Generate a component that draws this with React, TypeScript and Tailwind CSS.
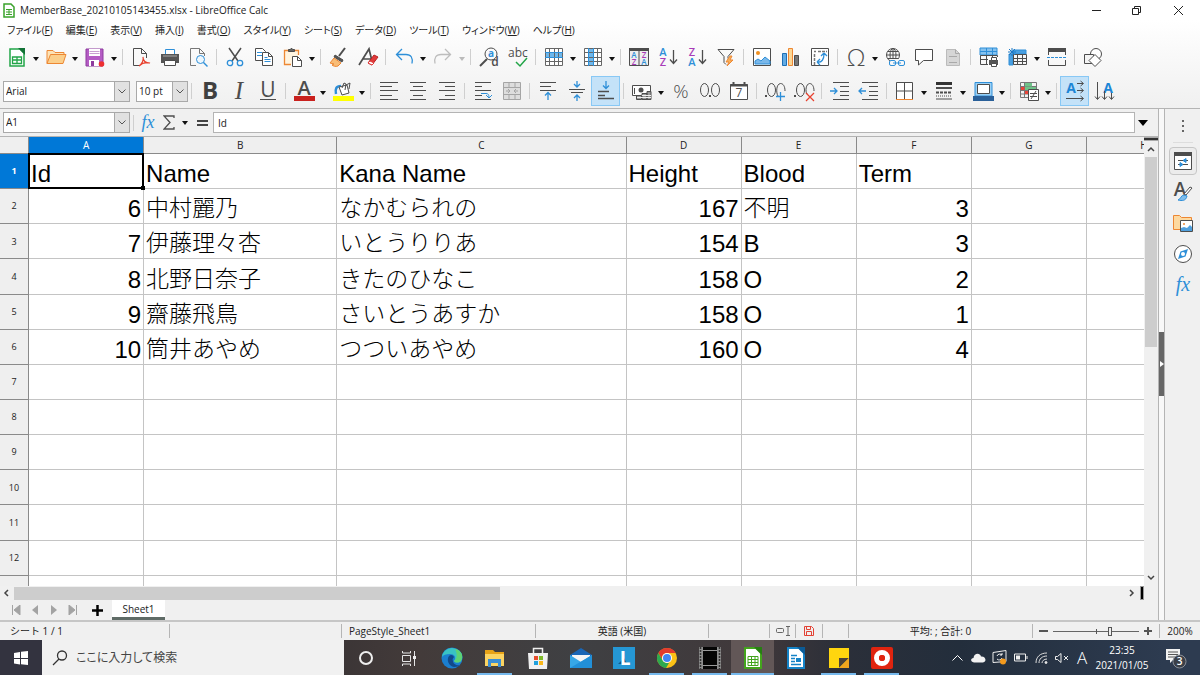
import type { ReactNode } from "react";

type Tool = { icon: ReactNode; label: string; menu?: boolean; muted?: boolean; active?: boolean };

const INK = "#4d4d4d";
const BLUE = "#2e8fd8";
const ORANGE = "#ed8733";

function Svg({ children, size = 20 }: { children: ReactNode; size?: number }) {
  return (
    <svg width={size} height={size} viewBox={`0 0 ${size} ${size}`} fill="none" stroke={INK} className="shrink-0 overflow-visible" aria-hidden="true">
      {children}
    </svg>
  );
}

function Letter({ x, y, size, fill, children, weight = 400 }: { x: number; y: number; size: number; fill: string; children: string; weight?: number }) {
  return (
    <text x={x} y={y} fontSize={size} fill={fill} fontWeight={weight} stroke="none" textAnchor="middle" fontFamily="Open Sans, sans-serif">{children}</text>
  );
}

function Fx({ size = 20 }: { size?: number }) {
  return (
    <Svg size={size}>
      <text x={size / 2} y={size - 4} fontSize={size} fill={BLUE} stroke="none" textAnchor="middle" fontStyle="italic" fontFamily="Liberation Serif, serif">fx</text>
    </Svg>
  );
}

const gridLines = <path d="M1.5 1.5h17v17h-17zM1.5 5.5h17M1.5 10.5h17M1.5 14.5h17M5.5 1.5v17M10.5 1.5v17M14.5 1.5v17" stroke="#666" />;

const standardTools: Tool[][] = [
  [
    { label: "新規", menu: true, icon: <Svg><path d="M3 2h10l4 4v13H3z" fill="#fff" stroke="#22a548" strokeWidth="1.500" /><path d="M11 1h7v7z" fill="#127336" stroke="none" /><path d="M5.500 10h9v6.500h-9zM5.500 13h9M10 10v6.500" stroke="#22a548" strokeWidth="1.300" /></Svg> },
    { label: "開く", menu: true, icon: <Svg><path d="M1 16.500V3.500h6l2 2h9v3" fill="#fde3b6" stroke={ORANGE} /><path d="M1 16.500l3.500-9h15.500l-3 9z" fill="#fbcf8b" stroke={ORANGE} /></Svg> },
    { label: "保存", menu: true, icon: <Svg><path d="M1 2h17v17H1z" fill="#b45cc4" stroke="#8d3b9e" /><path d="M4 2h11v7H4z" fill="#fff" stroke="none" /><path d="M4 13h10v6H4z" fill="#fff" stroke="none" /><path d="M6 14h3v5H6z" fill="#8d3b9e" stroke="none" /><path d="M4.500 4.500h10M4.500 6.500h10" stroke="#c9a0d2" /><circle cx="16.500" cy="17" r="2.800" fill="#ee3030" stroke="none" /></Svg> },
  ],
  [
    { label: "PDF", icon: <Svg><path d="M8 18.500H2.500v-17h8l5 5V11M10.500 1.500v5h5" /><path d="M8 19c3-2 5-6 4-9 0 4 3 6 7 6-4-1-8 0-11 3z" stroke="#e8402e" strokeWidth="1.200" /></Svg> },
    { label: "印刷", icon: <Svg><path d="M5.500 8V2.500h9V8" fill="#fff" stroke={BLUE} /><path d="M1 7h18v9H1z" fill="#555" stroke="none" /><path d="M3 9h14" stroke="#aaa" /><path d="M4.500 13.500h11v5h-11z" fill="#fff" /></Svg> },
    { label: "印刷プレビュー", icon: <Svg><path d="M7 18.500H1.500v-17h9l5 5V9M10.500 1.500v5h5" stroke="#777" /><circle cx="11.500" cy="12.500" r="4" stroke={BLUE} fill="#eef7fd" /><path d="M14.500 15.500l4 4" stroke={BLUE} strokeWidth="1.500" /></Svg> },
  ],
  [
    { label: "切り取り", icon: <Svg><path d="M4 1l9 13M16 1L7 14" strokeWidth="1.500" /><circle cx="5" cy="16" r="2.700" stroke={BLUE} strokeWidth="1.300" /><circle cx="15" cy="16" r="2.700" stroke={BLUE} strokeWidth="1.300" /></Svg> },
    { label: "コピー", icon: <Svg><path d="M1.500 1.500h7l3 3v9h-10z" fill="#fff" /><path d="M3 5.500h5M3 8.500h5" stroke={BLUE} /><path d="M8.500 5.500h6l4 4v9h-10z" fill="#fff" /><path d="M14.500 5.500v4h4" /><path d="M10.500 10.500h3M10.500 12.500h6M10.500 14.500h6" stroke={BLUE} /></Svg> },
    { label: "貼り付け", menu: true, icon: <Svg><path d="M8 17.500H1.500v-14h14V8" stroke={ORANGE} fill="#fff4e0" strokeWidth="1.300" /><path d="M5.500 4.500v-2h2l1-1.500 1 1.500h2v2z" fill="#666" /><path d="M9.500 9.500h5l4 4v6h-9z" fill="#fff" /><path d="M14.500 9.500v4h4" /></Svg> },
  ],
  [
    { label: "書式のコピー", icon: <Svg><path d="M16 1l-6 8" strokeWidth="2" /><path d="M6 8l8 5-1 2-8-5z" fill="#555" /><path d="M5 11l7 5-3 3c-2 1-5 0-6-1l2-1-4-1z" fill="#f8bd78" stroke={ORANGE} /></Svg> },
    { label: "書式のクリア", icon: <Svg><path d="M1 18L11 2l3 12M5 12h8" strokeWidth="1.700" /><path d="M10 16l6-8 4 2-6 8z" fill="#e03a3a" stroke="#b92222" /><path d="M10 16l2-2 4 2-2 2z" fill="#fff" stroke="#e03a3a" /></Svg> },
  ],
  [
    { label: "元に戻す", menu: true, icon: <Svg><path d="M8 2L2.500 7.500 8 13M3 7.500h9c5 0 7 3 6 9" stroke={BLUE} strokeWidth="1.300" /></Svg> },
    { label: "やり直し", menu: true, muted: true, icon: <Svg><path d="M12 2l5.500 5.500L12 13M17 7.500H8c-5 0-7 3-6 9" stroke="#bdbdbd" strokeWidth="1.300" /></Svg> },
  ],
  [
    { label: "検索と置換", icon: <Svg><circle cx="12" cy="7" r="6" /><path d="M8 12l-7 7" strokeWidth="2" /><Letter x={12} y={10} size={10} fill={BLUE} weight={700}>a</Letter><Letter x={16} y={19} size={12} fill={INK} weight={600}>d</Letter></Svg> },
    { label: "スペルチェック", icon: <Svg><Letter x={10} y={10} size={12} fill={INK}>abc</Letter><path d="M8 15l4 4 7-8" stroke="#22a548" strokeWidth="1.500" /></Svg> },
  ],
  [
    { label: "行", menu: true, icon: <Svg><path d="M1 1h18v18H1z" fill="#fff" stroke="none" /><path d="M1 5h18v5H1z" fill="#6db7ec" stroke="none" />{gridLines}<path d="M1 5.500h18M1 10.500h18" stroke={BLUE} /></Svg> },
    { label: "列", menu: true, icon: <Svg><path d="M1 1h18v18H1z" fill="#fff" stroke="none" /><path d="M5 1h6v18H5z" fill="#6db7ec" stroke="none" />{gridLines}<path d="M5.500 1v18M10.500 1v18" stroke={BLUE} /></Svg> },
  ],
  [
    { label: "並べ替え", icon: <Svg><path d="M.5 1.500h19v17H.5z" fill="#eee" /><path d="M0 1h20v3H0z" fill={INK} stroke="none" /><path d="M10 4v14" /><Letter x={5} y={11} size={8} fill={BLUE} weight={600}>A</Letter><Letter x={5} y={18} size={8} fill="#a83bb8" weight={600}>Z</Letter><Letter x={15} y={11} size={8} fill="#a83bb8" weight={600}>Z</Letter><Letter x={15} y={18} size={8} fill={BLUE} weight={600}>A</Letter></Svg> },
    { label: "昇順", icon: <Svg><Letter x={5} y={9} size={11} fill={BLUE} weight={600}>A</Letter><Letter x={5} y={19} size={11} fill="#a83bb8" weight={600}>Z</Letter><path d="M15.500 3v13M12 12.500l3.500 4 3.500-4" strokeWidth="1.300" /></Svg> },
    { label: "降順", icon: <Svg><Letter x={5} y={9} size={11} fill="#a83bb8" weight={600}>Z</Letter><Letter x={5} y={19} size={11} fill={BLUE} weight={600}>A</Letter><path d="M15.500 3v13M12 12.500l3.500 4 3.500-4" strokeWidth="1.300" /></Svg> },
    { label: "オートフィルター", icon: <Svg><path d="M2 2.500h16l-6 7v2M2 2.500l6 7v6l2 2" /><path d="M14 9l-4 6h3l-2 4 6-6h-3l2-4z" fill="#f9b15a" stroke={ORANGE} /></Svg> },
  ],
  [
    { label: "画像", icon: <Svg><path d="M1.500 1.500h17v17h-17z" fill="#fff" /><circle cx="6" cy="6" r="2" fill="#ef9021" stroke="none" /><path d="M3 17v-3l3-2 3 2 4-4 5 4v3z" fill="#7ab8ea" stroke={BLUE} /></Svg> },
    { label: "グラフ", icon: <Svg><path d="M1.500 6.500h4v12h-4z" fill="#63abe4" stroke="#1d6fb5" /><path d="M7.500 1.500h4v17h-4z" fill="#fcd795" stroke={ORANGE} /><path d="M13.500 8.500h4v10h-4z" fill="#777" /></Svg> },
    { label: "ピボットテーブル", icon: <Svg><path d="M1.500 1.500h17v17h-17z" fill="#fff" /><path d="M4 4.500h2M8 4.500h9M4.500 7v11" strokeWidth="1.500" strokeDasharray="3 1" stroke="#777" /><path d="M7 15c5 1 7-3 7-8M7 15l3-3M7 15l3 3M14 6l-3 3M14 6l3 3" stroke={BLUE} strokeWidth="1.300" /></Svg> },
  ],
  [
    { label: "特殊文字", menu: true, icon: <Svg><Letter x={10} y={19} size={24} fill={INK} weight={300}>Ω</Letter></Svg> },
    { label: "ハイパーリンク", icon: <Svg><circle cx="8" cy="8" r="6.500" /><ellipse cx="8" cy="8" rx="3" ry="6.500" /><path d="M1.500 8h13M3 4.500h10M3 11.500h10M8 1.500v13" /><path d="M5 12h14v7H5z" fill="#f8f8f8" stroke="none" /><rect x="4.500" y="13.500" width="6" height="5" rx="1.500" stroke={BLUE} /><rect x="13.500" y="13.500" width="6" height="5" rx="1.500" stroke={BLUE} /><path d="M8 16h8" stroke={BLUE} /></Svg> },
    { label: "コメント", icon: <Svg><path d="M1.500 2.500h17v11h-9l-5 4.500v-4.500h-3z" fill="#fff" /></Svg> },
    { label: "ヘッダーとフッター", icon: <Svg><path d="M3.500 2.500h9l4 4v12h-13z" fill="#d6d6d6" stroke="#bbb" /><path d="M12.500 2.500v4h4M6 9.500h8M6 15.500h8" stroke="#a9a9a9" /></Svg> },
  ],
  [
    { label: "印刷範囲", icon: <Svg><path d="M1 1h17v7H1z" fill="#86c2ef" stroke={BLUE} /><path d="M1.500 8.500h17v9h-17zM1.500 12.500h17M7.500 8.500v9M13.500 8.500v9" /><path d="M1 4.500h17M7.500 1v7M13.500 1v7" stroke={BLUE} /><path d="M9 10h11v10H9z" fill="#fff" stroke="none" /><path d="M10 13h9v5h-9z" fill="#555" stroke="none" /><path d="M12.500 10.500h5v3h-5zM12.500 16.500h5v3h-5z" fill="#fff" /></Svg> },
    { label: "行と列の固定", menu: true, icon: <Svg><path d="M5 3h13v4H5zM1 7h4v11H1z" fill="#4a9fe0" stroke={BLUE} /><path d="M5.500 7.500h13v10h-13zM5.500 11.500h13M5.500 14.500h13M9.500 7v10M14.500 7v10" /><path d="M4 1v8M0 5h8M1 2l6 6M7 2L1 8" stroke="#1d78c4" /></Svg> },
    { label: "ウィンドウの分割", icon: <Svg><path d="M1 1h18v4H1z" fill={INK} stroke="none" /><path d="M1.500 5v3M18.500 5v3M1.500 13v5.500h17V13" /><path d="M0 10.500h20" stroke={BLUE} strokeDasharray="3 1" /></Svg> },
  ],
  [
    { label: "図形描画機能", icon: <Svg><circle cx="13" cy="7" r="5.500" fill="#fff" /><path d="M1.500 7.500h9v9h-9z" fill="#f4f4f4" /><path d="M12 7.500l6 6-6 6-6-6z" fill="#fff" /></Svg> },
  ],
];

const formattingTools: Tool[][] = [
  [
    { label: "太字", icon: <Svg><Letter x={10} y={18} size={24} fill="#404040" weight={700}>B</Letter></Svg> },
    { label: "斜体", icon: <Svg><text x="10" y="18" fontSize="25" fill={INK} stroke="none" textAnchor="middle" fontStyle="italic" fontFamily="Liberation Serif, serif">I</text></Svg> },
    { label: "下線", icon: <Svg><Letter x={10} y={16} size={21} fill={INK}>U</Letter><path d="M2 18.500h16" /></Svg> },
  ],
  [
    { label: "文字の色", menu: true, icon: <Svg><Letter x={10} y={14} size={20} fill={INK} weight={600}>A</Letter><path d="M0 15h21v5H0z" fill="#c9211e" stroke="none" /></Svg> },
    { label: "背景色", menu: true, icon: <Svg><path d="M0 15h21v5H0z" fill="#ff0" stroke="none" /><path d="M3 13c-1-5 0-8 5-8" stroke={BLUE} strokeWidth="2.500" /><path d="M6 6l8-2 2 8-7 2z" fill="#fff" /><path d="M9 7l2-5 2 1-1 6M13 4l4-2-1 6" /></Svg> },
  ],
  [
    { label: "左揃え", icon: <Svg><path d="M1 1.500h18M1 5.500h12M1 9.500h18M1 14.500h12M1 18.500h18" /></Svg> },
    { label: "中央揃え", icon: <Svg><path d="M2 1.500h16M5 5.500h10M2 9.500h16M5 14.500h10M2 18.500h16" /></Svg> },
    { label: "右揃え", icon: <Svg><path d="M2 1.500h16M8 5.500h10M2 9.500h16M8 14.500h10M2 18.500h16" /></Svg> },
  ],
  [
    { label: "折り返し", icon: <Svg><path d="M2 1.500h16M2 5.500h7M2 9.500h16M2 14.500h7M2 18.500h16" /><path d="M8 12.500h5c2 0 3 1 3 4M13 14l3 3 3-3" stroke={BLUE} fill="#f8f8f8" /></Svg> },
    { label: "セルの結合", icon: <Svg><path d="M1.500 1.500h17v17h-17z" fill="#ddd" stroke="#a5a5a5" /><path d="M1 6.500h18M1 13.500h18M7 1.500v5M13 1.500v5M7 13.500v5M13 13.500v5M4 10h4M12 10h4M6 8l2 2-2 2M14 8l-2 2 2 2" stroke="#a5a5a5" /></Svg> },
  ],
  [
    { label: "上揃え", icon: <Svg><path d="M2 1.500h16M2 5.500h11M2 9.500h16" /><path d="M10 19v-7M7 14.500l3-3 3 3" stroke={BLUE} strokeWidth="1.300" /></Svg> },
    { label: "上下中央揃え", icon: <Svg><path d="M2 8.500h16M4 11.500h12" /><path d="M10 0v6M7 3l3 3 3-3M10 20v-6M7 17l3-3 3 3" stroke={BLUE} strokeWidth="1.300" /></Svg> },
    { label: "下揃え", active: true, icon: <Svg><path d="M2 10.500h11M2 14.500h7M2 17.500h16" strokeWidth="1.300" /><path d="M10 0v7M7 4.500l3 3 3-3" stroke={BLUE} strokeWidth="1.300" /></Svg> },
  ],
  [
    { label: "通貨", menu: true, icon: <Svg><path d="M5 14.500H.5v-10h18V10" fill="#fff" /><path d="M2.500 7v6" /><circle cx="9" cy="9" r="2.500" fill={INK} stroke="none" /><path d="M4.500 14.500h5v4h-5zM10 12.500h5v6h-5zM15 10.500h4v8h-4z" fill="#999" /><path d="M5 16.500h14M10 14.500h9" stroke="#eee" /></Svg> },
    { label: "パーセント", icon: <Svg><Letter x={10} y={17} size={19} fill={INK} weight={300}>%</Letter></Svg> },
    { label: "数値", icon: <Svg><ellipse cx="4.500" cy="9" rx="4" ry="6.500" /><ellipse cx="15.500" cy="9" rx="4" ry="6.500" /><path d="M9 14h2v2H9z" fill={INK} stroke="none" /></Svg> },
    { label: "日付", icon: <Svg><path d="M1.500 3.500h17v15h-17z" fill="#fff" /><path d="M1 4.500h18" strokeWidth="2" /><path d="M4.500 1v3M15.500 1v3" strokeWidth="2" /><Letter x={10} y={16} size={12} fill={INK}>7</Letter></Svg> },
  ],
  [
    { label: "小数点以下を追加", icon: <Svg><path d="M0 14h2v2H0z" fill={INK} stroke="none" /><ellipse cx="6.500" cy="9" rx="4" ry="6.500" /><path d="M13 15c-2-3-2-12 2.500-12.500C18 2.500 20 5 20 10" /><path d="M15.500 11v9M11 15.500h9" stroke={BLUE} strokeWidth="1.300" /></Svg> },
    { label: "小数点以下を削除", icon: <Svg><path d="M0 14h2v2H0z" fill={INK} stroke="none" /><ellipse cx="6.500" cy="9" rx="4" ry="6.500" /><path d="M13 13c-2-3-1-10 2.500-10.500C18 2.500 20 5 20 10" /><path d="M12 12l8 8M20 12l-8 8" stroke="#e8402e" strokeWidth="1.200" /></Svg> },
  ],
  [
    { label: "インデントを増やす", icon: <Svg><path d="M3 1.500h16M10 5.500h9M10 10.500h9M10 14.500h9M3 18.500h16" /><path d="M0 10h7M4 7l3 3-3 3" stroke={BLUE} strokeWidth="1.300" /></Svg> },
    { label: "インデントを減らす", icon: <Svg><path d="M3 1.500h16M10 5.500h9M10 10.500h9M10 14.500h9M3 18.500h16" /><path d="M7 10H0M3 7l-3 3 3 3" stroke={BLUE} strokeWidth="1.300" /></Svg> },
  ],
  [
    { label: "枠線", menu: true, icon: <Svg><path d="M1.500 18V1.500h16V18M1.500 10h16M9.500 1.500V18" fill="#fff" /><path d="M1 18.500h17" stroke={ORANGE} /></Svg> },
    { label: "枠線のスタイル", menu: true, icon: <Svg><path d="M2 2.500h16" strokeWidth="3" stroke="#333" /><path d="M2 7h16" strokeWidth="2" /><path d="M2 11.500h16" strokeDasharray="3 1" strokeWidth="2" /><path d="M2 15h16" strokeDasharray="1 1" /><path d="M2 18h16" /></Svg> },
    { label: "枠線の色", menu: true, icon: <Svg><path d="M2 1.500h17V15H2z" fill="#9bd0f5" stroke={BLUE} /><path d="M4.500 3.500h12v9h-12z" fill="#fff" /><path d="M0 15h21v5H0z" fill="#2a6099" stroke="none" /></Svg> },
  ],
  [
    { label: "条件付き書式", menu: true, icon: <Svg><path d="M1.500 1.500h16v15h-16zM1.500 5.500h16M1.500 9.500h16M1.500 13h16M5.500 1.500v15" stroke="#777" /><path d="M2 6h3.500v3H2zM6 10h4v3H6z" fill="#e9443a" stroke="none" /><path d="M6 2h7v3.500H6zM6 6h11v3H6z" fill="#6fc489" stroke="none" /><path d="M9.500 8.500h10v11h-10z" fill="#fff" /><path d="M11 12.500h7M11 15.500h7M17 10l-5 8" /></Svg> },
  ],
  [
    { label: "左から右", active: true, icon: <Svg><Letter x={6} y={12} size={14} fill="#1d86d6" weight={700}>A</Letter><path d="M12 2.500h6M12 9.500h6M1 17.500h17M15.500 0l3 2.500-3 2.500M15.500 7l3 2.500-3 2.500M15.500 15l3 2.500-3 2.500" /></Svg> },
    { label: "上から下", icon: <Svg><Letter x={14} y={12} size={14} fill="#1d86d6" weight={700}>A</Letter><path d="M3.500 1v17M10.500 10v8M17.500 12v6M1 15.500l2.500 3 2.500-3M8 15.500l2.500 3 2.500-3M15 15.500l2.500 3 2.500-3" /></Svg> },
  ],
];

function Caret({ muted }: { muted?: boolean }) {
  return (
    <svg width="6" height="4" viewBox="0 0 6 4" fill={muted ? "#bbb" : "#111"} aria-hidden="true">
      <path d="M0 0h6L3 4z" />
    </svg>
  );
}

function Divider() {
  return <span className="mx-[3px] h-4 w-px shrink-0 bg-[#cfcfcf]" />;
}

function ToolGroups({ groups }: { groups: Tool[][] }) {
  return (
    <>
      {groups.map((group, i) => (
        <div key={i} className="flex items-center">
          {i > 0 && <Divider />}
          {group.map((tool) => (
            <div key={tool.label} className="flex items-center">
              <button
                aria-label={tool.label}
                className={tool.active
                  ? "flex h-[30px] w-[29px] items-center justify-center border border-[#88c8f5] bg-[#c4e2f8]"
                  : "flex h-[30px] w-[29px] items-center justify-center"}
              >
                {tool.icon}
              </button>
              {tool.menu && (
                <button aria-label={`${tool.label} メニュー`} className="flex h-[30px] w-[10px] items-center justify-center pt-1">
                  <Caret muted={tool.muted} />
                </button>
              )}
            </div>
          ))}
        </div>
      ))}
    </>
  );
}

function Combo({ label, value, wide }: { label: string; value: string; wide?: boolean }) {
  return (
    <div className={wide ? "flex h-[21px] w-[127px] border border-[#a9a9a9] bg-white" : "flex h-[21px] w-[52px] border border-[#a9a9a9] bg-white"}>
      <select aria-label={label} className="min-w-0 flex-1 appearance-none pl-[2px] text-[10px] leading-[19px] outline-none">
        <option>{value}</option>
      </select>
      <span className="flex w-[15px] items-center justify-center border-l border-[#a9a9a9] bg-[#e1e1e1]">
        <svg width="8" height="5" viewBox="0 0 8 5" fill="none" stroke="#555" aria-hidden="true"><path d="M.5.5L4 4 7.500.500" /></svg>
      </span>
    </div>
  );
}

const menus = [
  ["ファイル", "F"], ["編集", "E"], ["表示", "V"], ["挿入", "I"], ["書式", "O"], ["スタイル", "Y"],
  ["シート", "S"], ["データ", "D"], ["ツール", "T"], ["ウィンドウ", "W"], ["ヘルプ", "H"],
];

const columns = ["A", "B", "C", "D", "E", "F", "G", "H"];

const rows: (string | number)[][] = [
  ["Id", "Name", "Kana Name", "Height", "Blood", "Term"],
  [6, "中村麗乃", "なかむられの", 167, "不明", 3],
  [7, "伊藤理々杏", "いとうりりあ", 154, "B", 3],
  [8, "北野日奈子", "きたのひなこ", 158, "O", 2],
  [9, "齋藤飛鳥", "さいとうあすか", 158, "O", 1],
  [10, "筒井あやめ", "つついあやめ", 160, "O", 4],
  [], [], [], [], [], [], [],
];

const isCjk = (value: string | number) => typeof value === "string" && /[^\x00-\x7f]/.test(value);

function cellClass(value: string | number | undefined) {
  if (value !== undefined && isCjk(value)) return "text-left text-[23px] font-light";
  if (typeof value === "number") return "text-right text-[24px]";
  return "text-left text-[24px]";
}

function Sheet() {
  return (
    <div className="min-w-0 flex-1 overflow-hidden bg-white">
      <table className="h-[474px] w-[1202px] table-fixed border-separate border-spacing-0">
        <colgroup>
          <col className="w-[29px]" />
          <col className="w-[115px]" />
          <col className="w-[193px]" />
          <col className="w-[289px]" />
          <col className="w-[115px]" />
          <col className="w-[115px]" />
          <col className="w-[115px]" />
          <col className="w-[115px]" />
          <col className="w-[115px]" />
        </colgroup>
        <thead>
          <tr className="h-[17px] text-[10px] leading-[14px] text-[#222]">
            <th className="border-r border-b border-[#8a8a8a] bg-[#efefef]" />
            {columns.map((name) => (
              <th
                key={name}
                className={name === "A"
                  ? "border-r border-b border-[#8a8a8a] bg-[#0078d7] p-0 font-normal text-white"
                  : "border-r border-b border-[#8a8a8a] bg-[#efefef] p-0 font-normal"}
              >
                {name}
              </th>
            ))}
          </tr>
        </thead>
        <tbody>
          {rows.map((row, r) => (
            <tr key={r}>
              <th
                className={r === 0
                  ? "border-r border-b border-[#8a8a8a] bg-[#0078d7] p-0 text-[9px] font-bold text-white"
                  : "border-r border-b border-[#8a8a8a] bg-[#efefef] p-0 text-[9px] font-medium text-[#222]"}
              >
                {r < 12 && r + 1}
              </th>
              {columns.map((name, c) => (
                <td key={name} className="relative border-r border-b border-[#c4c4c4] p-0 align-bottom font-['Liberation_Sans','Noto_Sans_CJK_JP',sans-serif] text-black">
                  <div className={`h-[29px] px-[2px] leading-[29px] whitespace-nowrap ${cellClass(row[c])}`}>{row[c]}</div>
                  {r === 0 && c === 0 && (
                    <span className="absolute -inset-px z-10 border-2 border-black">
                      <span className="absolute -right-[3px] -bottom-[3px] size-1 bg-black" />
                    </span>
                  )}
                </td>
              ))}
            </tr>
          ))}
        </tbody>
      </table>
    </div>
  );
}

function Chevron({ d }: { d: string }) {
  return (
    <svg width="8" height="8" viewBox="0 0 8 8" fill="none" stroke="#444" strokeWidth="1.500" aria-hidden="true"><path d={d} /></svg>
  );
}

function Sidebar() {
  return (
    <aside className="flex w-[35px] flex-col items-center bg-[#f0f0f0]">
      <button aria-label="サイドバーの設定" className="flex h-[33px] w-full items-center justify-center">
        <svg width="2" height="12" viewBox="0 0 2 12" fill="#666" aria-hidden="true"><path d="M0 0h2v2H0zM0 5h2v2H0zM0 10h2v2H0z" /></svg>
      </button>
      <div className="flex w-5 border-t border-[#ddd] pb-1" />
      <div className="flex flex-col items-center gap-[3px]">
        <button aria-label="プロパティ" className="flex size-7 items-center justify-center rounded-sm border border-[#c6c6c6] bg-[#ececec]">
          <Svg><path d="M1.500 1.500h17v17h-17z" fill="#fff" /><path d="M1 1h18v4H1z" fill={INK} stroke="none" /><path d="M5 9.500h10M5 13.500h10" /><path d="M10 9.500l3-2v4zM10 13.500l-3-2v4z" fill={BLUE} stroke={BLUE} /></Svg>
        </button>
        <button aria-label="スタイル" className="flex size-7 items-center justify-center">
          <Svg><Letter x={7} y={14} size={19} fill={INK} weight={600}>A</Letter><path d="M19 6l-6 7-2-1 6-7z" fill="#fff" /><path d="M11 13c-3 0-3 4-6 5 4 1 8 1 9-4z" fill="#7fbdec" stroke={BLUE} /></Svg>
        </button>
        <button aria-label="ギャラリー" className="flex size-7 items-center justify-center">
          <Svg><path d="M.5 16.500v-14h6l2 2h10v12z" fill="#fdd9a0" stroke={ORANGE} /><path d="M7.500 7.500h12v11h-12z" fill="#fff" /><path d="M8 18v-3l3-1 3 1 3-3 2 2v4z" fill="#4f9fdd" stroke="none" /><circle cx="11" cy="11" r="1" fill={ORANGE} stroke="none" /></Svg>
        </button>
        <button aria-label="ナビゲーター" className="flex size-7 items-center justify-center">
          <Svg><circle cx="10" cy="10" r="8.500" fill="#fff" /><path d="M15 5l-2.500 7.500L5 15l2.500-7.500z" fill={BLUE} stroke="none" /><circle cx="10" cy="10" r="2" fill="#fff" stroke="none" /></Svg>
        </button>
        <button aria-label="関数" className="flex size-7 items-center justify-center"><Fx size={20} /></button>
      </div>
    </aside>
  );
}

function StatusBar() {
  const cell = "flex items-center justify-center border-r border-[#b5b5b5]";
  return (
    <footer className="flex h-[20px] border-t-2 border-[#c6c6c6] bg-[#f0f0f0] py-[2px] text-[10px] leading-[14px]">
      <div className="flex w-[170px] items-center border-r border-[#b5b5b5] pl-[10px]">シート 1 / 1</div>
      <div className={`w-[172px] ${cell}`} />
      <div className="flex w-[194px] items-center border-r border-[#b5b5b5] pl-[7px]">PageStyle_Sheet1</div>
      <div className={`w-[173px] ${cell}`}>英語 (米国)</div>
      <div className={`w-[61px] ${cell}`} />
      <div className={`w-[26px] ${cell}`}>
        <svg width="14" height="10" viewBox="0 0 14 10" fill="none" stroke="#666" aria-hidden="true"><rect x=".5" y="2.500" width="7" height="4" rx="1" /><path d="M10 .5h4M12 .5v9M10 9.500h4" /></svg>
      </div>
      <div className={`w-[27px] ${cell}`}>
        <svg width="10" height="10" viewBox="0 0 10 10" fill="none" stroke="#e34234" aria-hidden="true"><path d="M.5.5h7l2 2v7h-9zM2.500.5v3h4v-3M2.500 9.500v-4h5v4" /></svg>
      </div>
      <div className={`w-[26px] ${cell}`} />
      <div className={`flex-1 ${cell}`}>平均: ; 合計: 0</div>
      <div className="flex w-[127px] items-center justify-center gap-1 border-r border-[#b5b5b5]">
        <button aria-label="縮小"><svg width="10" height="10" viewBox="0 0 10 10" stroke="#555" strokeWidth="2" aria-hidden="true"><path d="M0 5h9" /></svg></button>
        <div className="relative flex items-center">
          <input
            type="range"
            aria-label="ズーム"
            defaultValue={67}
            className="h-3 w-[86px] appearance-none bg-transparent [&::-webkit-slider-runnable-track]:h-px [&::-webkit-slider-runnable-track]:bg-[#666] [&::-webkit-slider-thumb]:-mt-1 [&::-webkit-slider-thumb]:h-[9px] [&::-webkit-slider-thumb]:w-1 [&::-webkit-slider-thumb]:appearance-none [&::-webkit-slider-thumb]:border [&::-webkit-slider-thumb]:border-[#555] [&::-webkit-slider-thumb]:bg-[#eee]"
          />
          <span className="absolute top-1 left-1/2 h-[5px] w-px bg-[#555]" />
        </div>
        <button aria-label="拡大"><svg width="10" height="10" viewBox="0 0 10 10" stroke="#555" strokeWidth="2" aria-hidden="true"><path d="M1 5h8M5 1v8" /></svg></button>
      </div>
      <div className="flex w-10 items-center justify-center">200%</div>
    </footer>
  );
}

const apps: { label: string; icon: ReactNode; running?: boolean; active?: boolean }[] = [
  { label: "Cortana", icon: <Svg size={22}><circle cx="11" cy="11" r="6" stroke="#eee" strokeWidth="2" /></Svg> },
  { label: "タスク ビュー", icon: <Svg size={22}><path d="M4.500 8.500h8v6h-8zM4.500 4v2h8V4M4.500 19v-2h8v2M16.500 4v15" stroke="#e5e5e5" /><path d="M15 9h3v3h-3z" fill="#eee" stroke="none" /></Svg> },
  { label: "Edge", icon: <Svg size={22}><g stroke="none"><circle cx="11" cy="11" r="10.500" fill="#1b7fd0" /><path d="M1 10C2 3 9-1 15 2c6 2 8 8 5 12-2 2-6 2-7 0 3-4 0-7-4-7-4 0-7 1-8 3z" fill="#39c3c4" /><path d="M14 2c6 1 9 7 6 12-2 2-6 2-7 0 4-3 3-8 1-12z" fill="#5ed374" /><path d="M8 9c-3 4 0 10 5 11 3 0 5-1 6-2-3 1-7-1-7-4-1-1 0-3 1-4-1-2-3-3-5-1z" fill="#114a8b" /></g></Svg> },
  { label: "エクスプローラー", running: true, icon: <Svg size={22}><g stroke="none"><path d="M1 3h8l2 2h9v14H1z" fill="#e8a317" /><path d="M1 7h19v12H1z" fill="#fcd462" /><path d="M4 12h13v8h-3v-4H7v4H4z" fill="#3b8ed4" /></g></Svg> },
  { label: "Microsoft Store", icon: <Svg size={22}><path d="M6.500 6V1.500h9V6" stroke="#eee" strokeWidth="1.500" /><g stroke="none"><path d="M1 6h20l-1 16H2z" fill="#f0f0f0" /><path d="M7 9h4v4H7z" fill="#e74c2b" /><path d="M12 9h4v4h-4z" fill="#7db928" /><path d="M7 14h4v4H7z" fill="#21a0dc" /><path d="M12 14h4v4h-4z" fill="#fbb819" /></g></Svg> },
  { label: "メール", icon: <Svg size={22}><g stroke="none"><path d="M0 8l11-7 11 7v13H0z" fill="#1a66b5" /><path d="M2 8h18v9H2z" fill="#f5f5f5" /><path d="M0 8l11 7 11-7v13H0z" fill="#37a7e6" /><path d="M0 21L22 8v13z" fill="#2290d8" /></g></Svg> },
  { label: "L", icon: <Svg size={22}><path d="M0 0h22v22H0z" fill="#2597d4" stroke="none" /><path d="M5 17l6-6 2 4 3 2z" fill="#155a86" stroke="none" /><Letter x={12} y={18} size={19} fill="#fff" weight={700}>L</Letter></Svg> },
  { label: "Chrome", running: true, icon: <Svg size={22}><g stroke="none"><circle cx="11" cy="11" r="10" fill="#fbc116" /><path d="M2.300 6a10 10 0 0117.400 0H11a5 5 0 00-4.300 7.500z" fill="#e33b2e" /><path d="M2.300 6l4.400 7.500A5 5 0 0011 16l2 0-3 5A10 10 0 012.300 6z" fill="#2da94f" /><circle cx="11" cy="11" r="5" fill="#fff" /><circle cx="11" cy="11" r="4" fill="#4285f4" /></g></Svg> },
  { label: "動画", running: true, icon: <Svg size={22}><path d="M0 0h22v22H0z" fill="#8d8d8d" stroke="none" /><path d="M4 0h14v22H4z" fill="#050505" stroke="none" /><path d="M1.500 0v22M20.500 0v22" stroke="#333" strokeDasharray="2 1" strokeWidth="1.500" /><path d="M4 3.500h14M4 18.500h14" stroke="#999" /></Svg> },
  { label: "Calc", running: true, active: true, icon: <Svg size={22}><path d="M3 1h11l5 5v15H3z" fill="#fff" stroke="#43a51c" strokeWidth="2" /><path d="M12 0h8v8z" fill="#277f12" stroke="none" /><path d="M6 9.500h10v9H6zM6 12.500h10M6 15.500h10M9.500 9.500v9M13 9.500v9" stroke="#43a51c" /></Svg> },
  { label: "Writer", icon: <Svg size={22}><path d="M3 1h11l5 5v15H3z" fill="#fff" stroke="#1583c7" strokeWidth="2" /><path d="M12 0h8v8z" fill="#0b5b96" stroke="none" /><path d="M6 8.500h6M6 11.500h4M6 14.500h4M6 17.500h10" stroke="#1583c7" strokeWidth="1.500" /><path d="M11 11h5v4h-5z" fill="#1583c7" stroke="none" /></Svg> },
  { label: "付箋", running: true, icon: <Svg size={22}><path d="M1 1h20v20H1z" fill="#ffd60f" stroke="none" /><path d="M11 21V11h10z" fill="#4a4239" stroke="none" /><path d="M11 21L21 11v10z" fill="#f0a51e" stroke="none" /></Svg> },
  { label: "録画", running: true, icon: <Svg size={22}><rect x="0" y="0" width="22" height="22" rx="2" fill="#e0240f" stroke="none" /><circle cx="11" cy="11" r="5.500" stroke="#fff" strokeWidth="5" /><circle cx="11" cy="11" r="3" fill="#e0240f" stroke="none" /></Svg> },
];

function Taskbar() {
  return (
    <div className="flex h-[35px] items-stretch bg-[linear-gradient(90deg,#3b3536_28%,#433b3a_35%,#3f4043_48%,#40383a_63%,#2b2f39_70%,#232e3c_80%,#2d3b50_97%)]">
      <button aria-label="スタート" className="flex w-[42px] items-center justify-center bg-[#33333f]">
        <svg width="14" height="14" viewBox="0 0 14 14" fill="#fff" aria-hidden="true"><path d="M0 2l6-1v6H0zM7 .8L14 0v7H7zM0 8h6v5.500L0 12.500zM7 8h7v6l-7-.8z" /></svg>
      </button>
      <label className="flex w-[302px] items-center bg-[#f1f1f1] pl-[10px]">
        <svg width="16" height="16" viewBox="0 0 16 16" fill="none" stroke="#333" strokeWidth="1.300" aria-hidden="true"><circle cx="10" cy="5.500" r="4.500" /><path d="M7 9l-6 6" /></svg>
        <input type="search" aria-label="検索" placeholder="ここに入力して検索" className="min-w-0 flex-1 pl-2 text-[12px] outline-none [font-feature-settings:'palt'] placeholder:text-[#444]" />
      </label>
      <nav className="flex">
        {apps.map((app) => (
          <button key={app.label} aria-label={app.label} className={app.active ? "flex w-[43px] flex-col items-center bg-[#625757]" : "flex w-[43px] flex-col items-center"}>
            <span className="flex h-[33px] items-center pt-[2px]">{app.icon}</span>
            {app.running && <span className={app.active ? "h-[2px] w-full bg-[#76b9ed]" : "h-[2px] w-[35px] bg-[#76b9ed]"} />}
          </button>
        ))}
      </nav>
      <div className="ml-auto flex items-center text-white">
        <div className="flex items-center">
          <button aria-label="隠れているインジケーター" className="flex w-[21px] justify-center"><svg width="11" height="6" viewBox="0 0 11 6" fill="none" stroke="#fff" aria-hidden="true"><path d="M.5 5.500l5-5 5 5" /></svg></button>
          <span className="flex w-[21px] justify-center"><svg width="15" height="10" viewBox="0 0 15 10" fill="#f2f2f2" aria-hidden="true"><path d="M3 9.500C-1 9-.5 5 2.500 5 3 0 9-.5 10 3.500c5-.5 6 5.500 2 6z" /></svg></span>
          <span className="flex w-[21px] justify-center"><svg width="16" height="15" viewBox="0 0 16 15" fill="none" stroke="#eee" aria-hidden="true"><path d="M1 2.500l13-2v11l-13 1z" /><path d="M10 5a3 3 0 00-5 1M5 9a3 3 0 005-1M10 3v2H8" /><circle cx="11" cy="11.500" r="3" fill="#f39a1d" stroke="none" /></svg></span>
          <span className="flex w-[21px] justify-center"><svg width="14" height="9" viewBox="0 0 14 9" fill="none" stroke="#eee" aria-hidden="true"><path d="M.5 1h11v7H.5zM13 3v3" /><path d="M2 2.500h4v4H2z" fill="#eee" stroke="none" /></svg></span>
          <span className="flex w-[21px] justify-center"><svg width="13" height="12" viewBox="0 0 13 12" fill="none" stroke="#ddd" aria-hidden="true"><path d="M1 11C1 5 5 1 12 1M4 11c0-4 3-7 8-7M7 11c0-2 2-4 5-4" /><circle cx="11" cy="10.500" r="1" fill="#fff" /></svg></span>
          <span className="flex w-[19px] justify-center"><svg width="14" height="10" viewBox="0 0 14 10" fill="none" stroke="#eee" aria-hidden="true"><path d="M.5 3.500h2L6 .5v9L2.500 6.500h-2zM9 3l4 4M13 3L9 7" /></svg></span>
          <span className="flex w-[22px] justify-center text-[17px] leading-5 font-light">A</span>
        </div>
        <time className="w-[58px] text-center text-[10px] leading-[15px]">23:35<br />2021/01/05</time>
        <button aria-label="通知" className="flex w-[49px] justify-center">
          <svg width="22" height="22" viewBox="0 0 22 22" aria-hidden="true">
            <path d="M1 2h14v11H8l-3 3v-3H1z" fill="#f2f2f2" />
            <path d="M3 5h10M3 7.500h10M3 10h10" stroke="#555" />
            <circle cx="14.500" cy="14.500" r="6.500" fill="#3a3f48" stroke="#8a8f98" />
            <Letter x={14.5} y={18} size={10} fill="#fff" weight={600}>3</Letter>
          </svg>
        </button>
      </div>
    </div>
  );
}

export default function App() {
  return (
    <div className="flex h-screen flex-col overflow-hidden bg-[#f0f0f0] font-['Open_Sans','Noto_Sans_CJK_JP',sans-serif] text-[#222]">
      <header className="flex h-5 items-center bg-white pl-[3px]">
        <svg width="12" height="15" viewBox="0 0 12 15" fill="#fff" stroke="#3aa22b" aria-hidden="true"><path d="M1 1h7l3 3v10H1z" strokeWidth="1.500" /><path d="M3 6.500h6M3 9h6M3 11.500h6M6 6v6" /></svg>
        <h1 className="flex-1 pl-[5px] text-[10px] leading-5">MemberBase_20210105143455.xlsx - LibreOffice Calc</h1>
        <div className="flex">
          <button aria-label="最小化" className="flex h-5 w-10 items-center justify-center"><svg width="9" height="9" viewBox="0 0 9 9" stroke="#222" aria-hidden="true"><path d="M0 4.500h9" /></svg></button>
          <button aria-label="元のサイズに戻す" className="flex h-5 w-10 items-center justify-center"><svg width="9" height="9" viewBox="0 0 9 9" fill="none" stroke="#222" aria-hidden="true"><path d="M.5 2.500h6v6h-6zM2.500 2.500v-2h6v6h-2" /></svg></button>
          <button aria-label="閉じる" className="flex h-5 w-11 items-center justify-center"><svg width="9" height="9" viewBox="0 0 9 9" stroke="#222" aria-hidden="true"><path d="M0 0l9 9M9 0L0 9" /></svg></button>
        </div>
      </header>

      <div className="border-b border-[#b4b4b4] bg-gradient-to-b from-white to-[#f0f0f0]">
        <nav className="flex h-5 items-center gap-[13px] pl-[7px] text-[10px] leading-5 whitespace-nowrap [font-feature-settings:'palt']">
          {menus.map(([name, key]) => (
            <button key={name}>{name}(<u>{key}</u>)</button>
          ))}
        </nav>
        <div className="flex h-[34px] items-center pl-[2px]">
          <ToolGroups groups={standardTools} />
        </div>
        <div className="flex h-[34px] items-center pl-[3px]">
          <Combo label="フォント名" value="Arial" wide />
          <div className="w-[6px]" />
          <Combo label="フォントサイズ" value="10 pt" />
          <Divider />
          <ToolGroups groups={formattingTools} />
        </div>
      </div>

      <main className="flex min-h-0 flex-1">
        <div className="flex min-w-0 flex-1 flex-col">
          <div className="flex h-7 items-center border-b border-[#b4b4b4] pr-[8px] pl-[3px]">
            <Combo label="名前ボックス" value="A1" wide />
            <Divider />
            <button aria-label="関数ウィザード" className="flex w-[22px] justify-center"><Fx size={18} /></button>
            <button aria-label="合計" className="flex w-5 justify-center">
              <svg width="12" height="15" viewBox="0 0 12 15" fill="none" stroke={INK} strokeWidth="1.300" aria-hidden="true"><path d="M11 3V1H1l6 6.500L1 14h10v-2" /></svg>
            </button>
            <button aria-label="合計 メニュー" className="flex w-3 justify-center"><Caret /></button>
            <button aria-label="数式" className="flex w-[22px] justify-center">
              <svg width="11" height="8" viewBox="0 0 11 8" stroke="#444" strokeWidth="2" aria-hidden="true"><path d="M0 2h11M0 6h11" /></svg>
            </button>
            <input aria-label="数式入力行" defaultValue="Id" className="h-[21px] min-w-0 flex-1 border border-[#b4b4b4] bg-white px-1 text-[10px] outline-none" />
            <button aria-label="数式バーの展開" className="flex w-[15px] justify-center">
              <svg width="10" height="6" viewBox="0 0 10 6" aria-hidden="true"><path d="M0 0h10L5 6z" /></svg>
            </button>
          </div>
          <div className="flex min-h-0 flex-1">
            <Sheet />
            <div className="flex w-[14px] flex-col items-center">
              <span className="h-1 w-full border-y border-[#aaa] bg-[#333]" />
              <button aria-label="上へ" className="flex h-4 items-center"><Chevron d="M1 6l3-3 3 3" /></button>
              <span className="h-[190px] w-3 bg-[#cdcdcd]" />
              <button aria-label="下へ" className="mt-auto flex h-4 items-center"><Chevron d="M1 2l3 3 3-3" /></button>
            </div>
          </div>
          <div className="flex h-[14px] items-center pr-[14px]">
            <button aria-label="左へ" className="flex w-[14px] justify-center"><Chevron d="M5 1L2 4l3 3" /></button>
            <span className="h-[13px] w-[486px] bg-[#cdcdcd]" />
            <button aria-label="右へ" className="mr-[2px] ml-auto flex w-[14px] justify-center"><Chevron d="M3 1l3 3-3 3" /></button>
            <span className="h-[14px] w-1 border border-[#999] bg-black" />
          </div>
          <div className="flex h-5 items-stretch pl-[6px]">
            {["M1.500 0v10M9 0v10L3 5z", "M8 0v10L2 5z", "M2 0v10l6-5z", "M8.500 0v10M1 0v10l6-5z"].map((d, i) => (
              <button key={d} aria-label={["最初のシート", "前のシート", "次のシート", "最後のシート"][i]} className="flex w-[19px] items-center justify-center">
                <svg width="10" height="10" viewBox="0 0 10 10" fill="#a3a3a3" stroke={i % 3 === 0 ? "#a3a3a3" : "none"} strokeWidth="1" aria-hidden="true"><path d={d} /></svg>
              </button>
            ))}
            <button aria-label="シートの追加" className="flex w-[30px] items-center justify-center">
              <svg width="11" height="11" viewBox="0 0 11 11" stroke="#000" strokeWidth="2.500" aria-hidden="true"><path d="M0 5.500h11M5.500 0v11" /></svg>
            </button>
            <button className="w-[53px] border-b-[3px] border-[#5f6b66] bg-white pt-[2px] text-[10px] leading-[15px]">Sheet1</button>
          </div>
        </div>
        <div className="flex w-[7px] flex-col border-x border-[#b4b4b4] bg-[#f8f8f8]">
          <button aria-label="サイドバーを隠す" className="mt-[223px] flex h-16 items-center justify-center bg-[#666]">
            <svg width="4" height="6" viewBox="0 0 4 6" fill="#fff" aria-hidden="true"><path d="M0 0l4 3-4 3z" /></svg>
          </button>
        </div>
        <Sidebar />
      </main>

      <StatusBar />
      <Taskbar />
    </div>
  );
}
